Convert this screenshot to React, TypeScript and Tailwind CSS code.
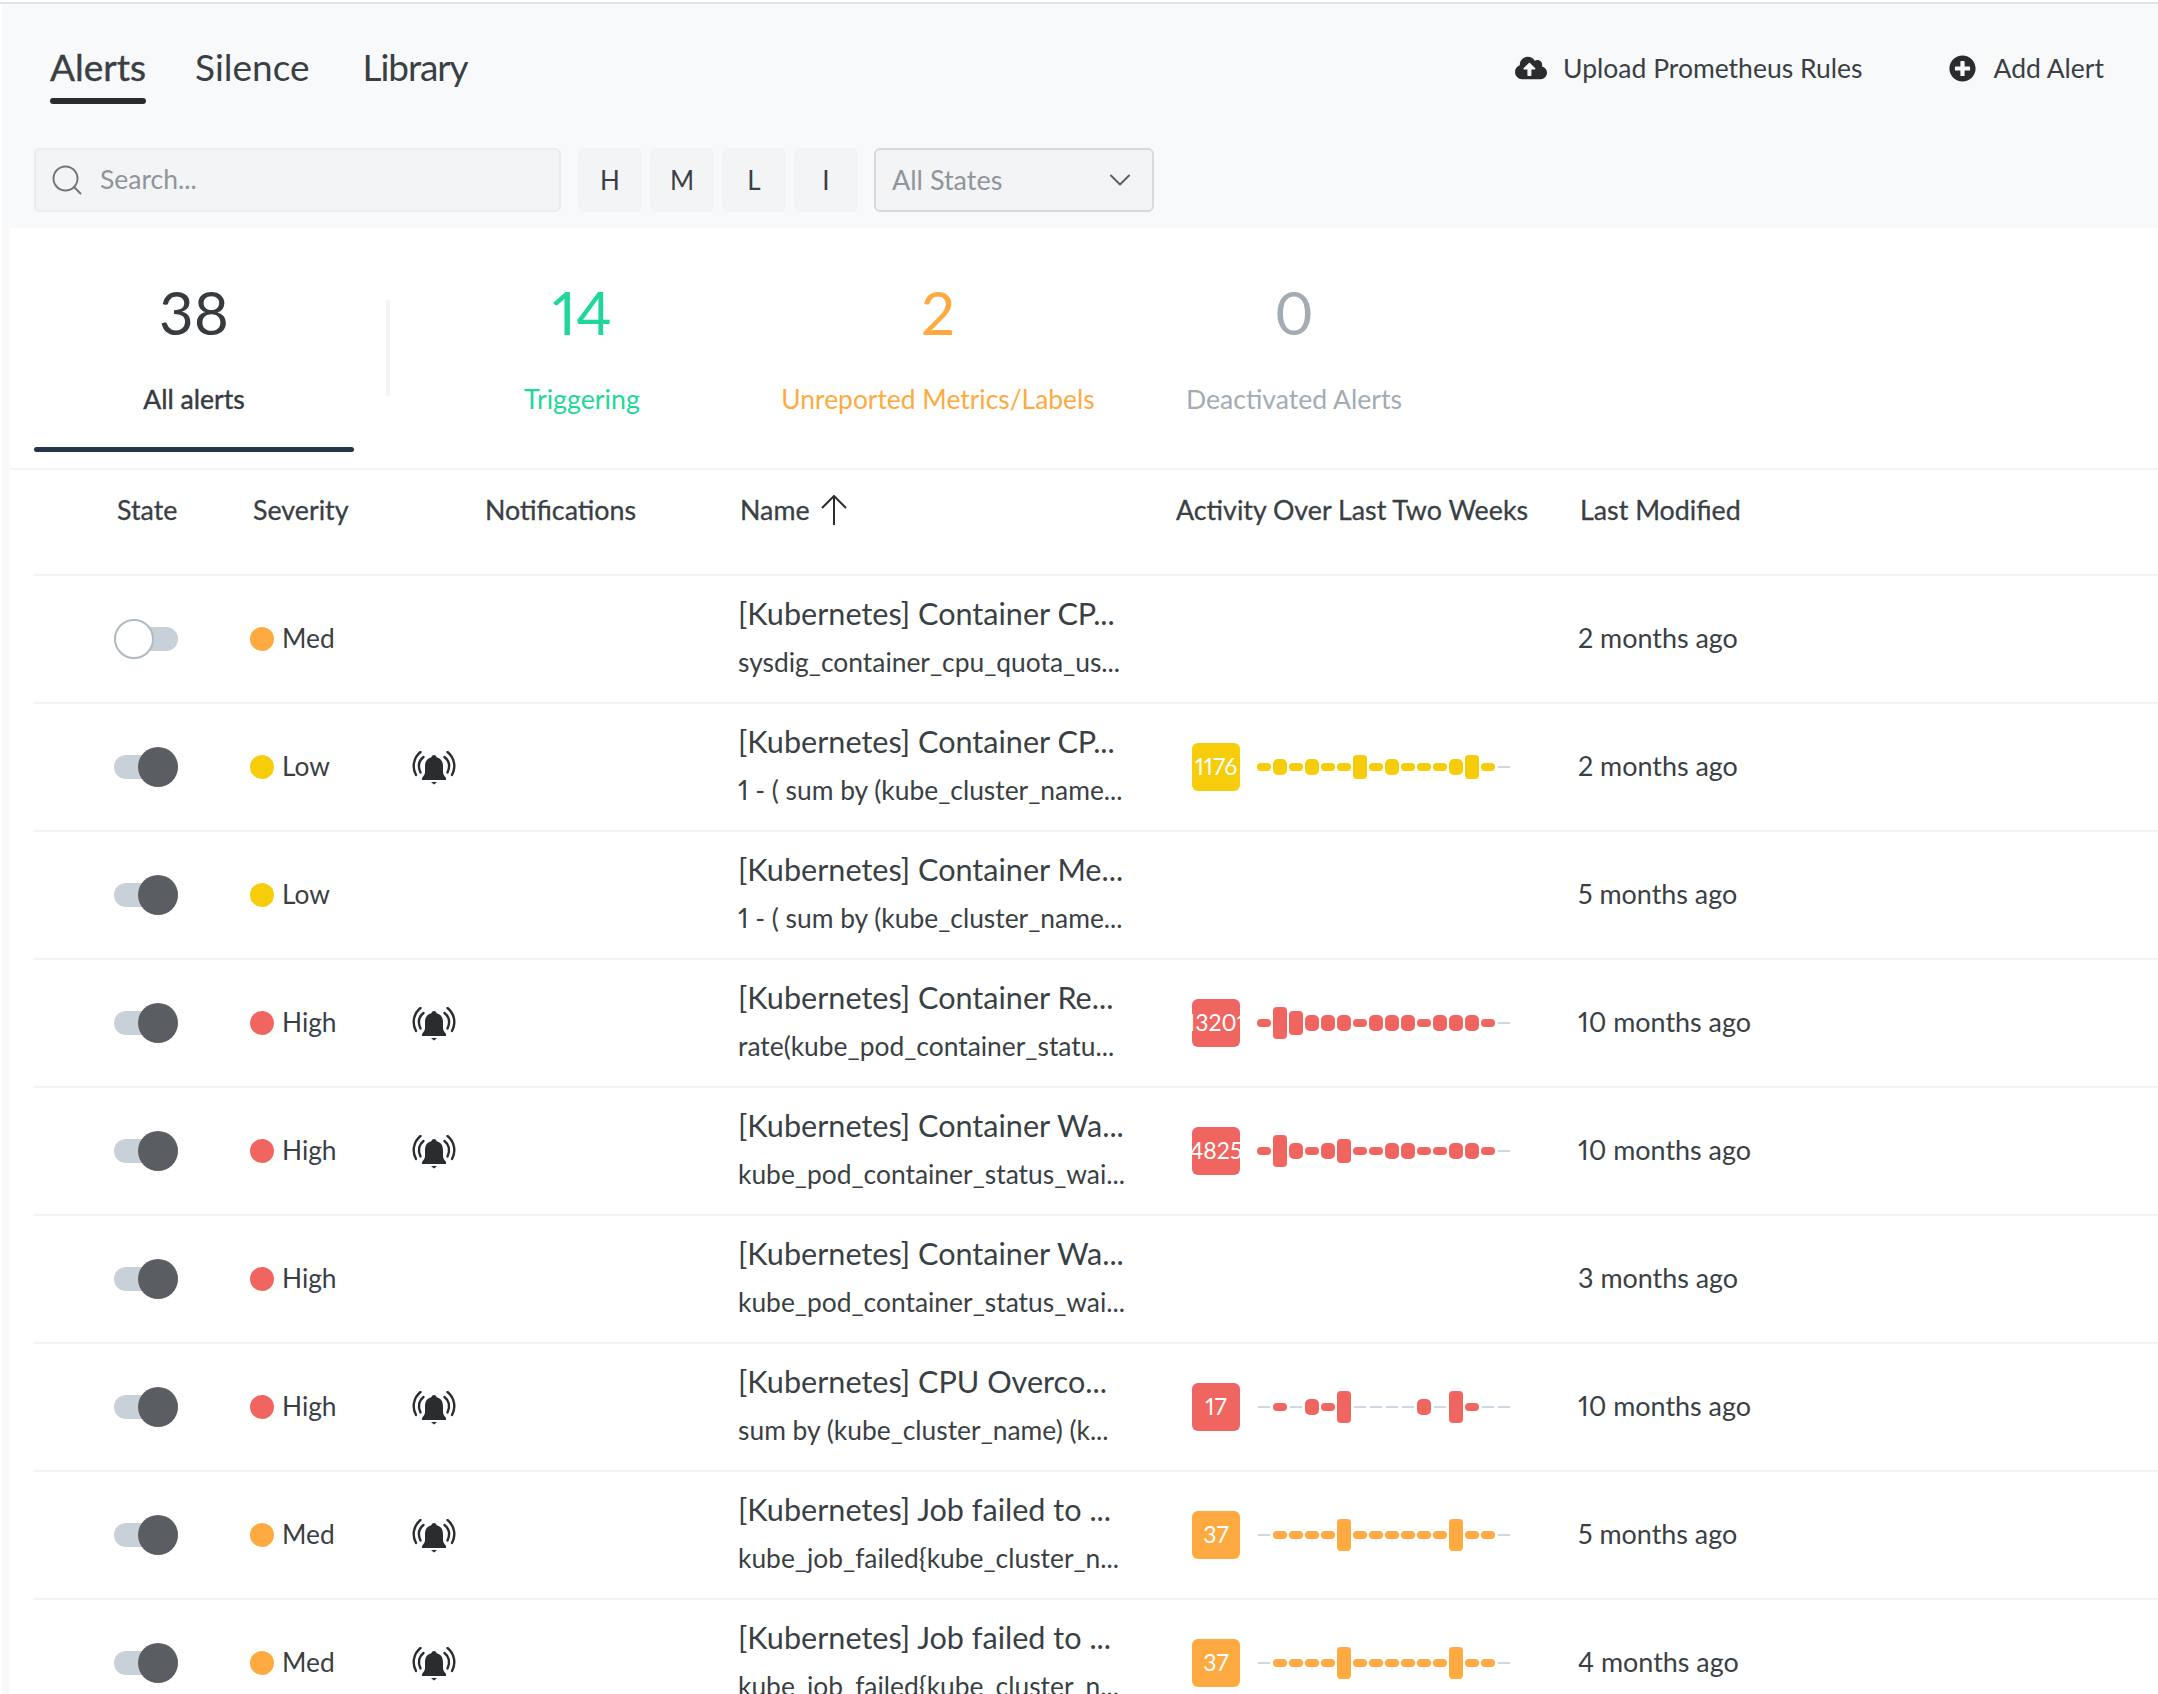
import React from "react";
import { Search, ChevronDown } from "lucide-react";
import { FaCloudUploadAlt, FaPlusCircle } from "react-icons/fa";

type Sev = "Med" | "Low" | "High";
const dotClass: Record<Sev, string> = {
  Med: "bg-[#ffaa40]",
  Low: "bg-[#f7cc0a]",
  High: "bg-[#f06560]",
};

type RowData = {
  on: boolean;
  sev: Sev;
  bell: boolean;
  title: string;
  sub: string;
  count?: string;
  bars?: string;
  time: string;
};

const rows: RowData[] = [
  { on: false, sev: "Med", bell: false, title: "[Kubernetes] Container CP...", sub: "sysdig_container_cpu_quota_us...", time: "2 months ago" },
  { on: true, sev: "Low", bell: true, title: "[Kubernetes] Container CP...", sub: "1 - ( sum by (kube_cluster_name...", count: "1176", bars: "smsmsslsmsssmls-", time: "2 months ago" },
  { on: true, sev: "Low", bell: false, title: "[Kubernetes] Container Me...", sub: "1 - ( sum by (kube_cluster_name...", time: "5 months ago" },
  { on: true, sev: "High", bell: true, title: "[Kubernetes] Container Re...", sub: "rate(kube_pod_container_statu...", count: "13201", bars: "sxlmmmsmmmsmmms-", time: "10 months ago" },
  { on: true, sev: "High", bell: true, title: "[Kubernetes] Container Wa...", sub: "kube_pod_container_status_wai...", count: "4825", bars: "sxmsmlssmmssmms-", time: "10 months ago" },
  { on: true, sev: "High", bell: false, title: "[Kubernetes] Container Wa...", sub: "kube_pod_container_status_wai...", time: "3 months ago" },
  { on: true, sev: "High", bell: true, title: "[Kubernetes] CPU Overco...", sub: "sum by (kube_cluster_name) (k...", count: "17", bars: "-s-msx----m-xs--", time: "10 months ago" },
  { on: true, sev: "Med", bell: true, title: "[Kubernetes] Job failed to ...", sub: "kube_job_failed{kube_cluster_n...", count: "37", bars: "-ssssxssssssxss-", time: "5 months ago" },
  { on: true, sev: "Med", bell: true, title: "[Kubernetes] Job failed to ...", sub: "kube_job_failed{kube_cluster_n...", count: "37", bars: "-ssssxssssssxss-", time: "4 months ago" },
];

function Bell() {
  return (
    <svg width="44" height="34" viewBox="0 0 44 34" fill="none" className="mt-[2px] block text-[#2a2d30]">
      <path
        d="M22 4C23.5 4 24.3 5 24.6 6.2C29 7.2 31 10.5 31 15L31 21C31 24 33 25.5 34 27L34 29L10 29L10 27C11 25.5 13 24 13 21L13 15C13 10.5 15 7.2 19.4 6.2C19.7 5 20.5 4 22 4Z"
        fill="currentColor"
      />
      <path d="M19 31H25L22 33.5Z" fill="currentColor" />
      <g stroke="currentColor" strokeWidth="2.4" strokeLinecap="round">
        <path d="M8.5 1C1 7 0 17 4 24" />
        <path d="M11.5 6C6.5 10 6 16 8.5 21.5" />
        <path d="M35.5 1C43 7 44 17 40 24" />
        <path d="M32.5 6C37.5 10 38 16 35.5 21.5" />
      </g>
    </svg>
  );
}

function Toggle({ on }: { on: boolean }) {
  return (
    <div className={`flex h-[24px] w-[64px] items-center rounded-full bg-[#c8d0d9] ${on ? "justify-end" : "justify-start"}`}>
      {on ? (
        <div className="h-[40px] w-[40px] shrink-0 rounded-full bg-[#5a5e63]" />
      ) : (
        <div className="h-[40px] w-[40px] shrink-0 rounded-full border-2 border-[#b0b8c0] bg-white" />
      )}
    </div>
  );
}

function Spark({ bars, sev }: { bars: string; sev: Sev }) {
  return (
    <div className="ml-[17px] flex items-center gap-[2px]">
      {bars.split("").map((b, i) => {
        if (b === "-") return <div key={i} className="mx-[1px] h-[2px] w-[12px] bg-[#cfd8e0]" />;
        if (b === "s") return <div key={i} className={`h-[8px] w-[14px] rounded-full ${dotClass[sev]}`} />;
        if (b === "m") return <div key={i} className={`h-[16px] w-[14px] rounded-[5px] ${dotClass[sev]}`} />;
        if (b === "l") return <div key={i} className={`h-[24px] w-[14px] rounded-[4px] ${dotClass[sev]}`} />;
        return <div key={i} className={`h-[32px] w-[14px] rounded-[4px] ${dotClass[sev]}`} />;
      })}
    </div>
  );
}

function Row({ r }: { r: RowData }) {
  return (
    <div className="ml-[23px] grid h-[128px] grid-cols-[136px_162px_326px_454px_385px_1fr] items-center border-t-2 border-[#f3f4f6] pl-[81px]">
      <Toggle on={r.on} />
      <div className="flex items-center">
        <span className={`h-[24px] w-[24px] rounded-full ${dotClass[r.sev]}`} />
        <span className="ml-[8px] text-[26.3px] text-[#3a3f44]">{r.sev}</span>
      </div>
      <div>{r.bell && <Bell />}</div>
      <div className="flex flex-col pb-[4px]">
        <span className="whitespace-nowrap text-[30.6px] leading-[36px] text-[#3a3f44]">{r.title}</span>
        <span className="mt-[14px] whitespace-nowrap text-[26.4px] leading-[32px] text-[#3a3f44]">{r.sub}</span>
      </div>
      <div className="flex items-center">
        {r.count && r.bars && (
          <>
            <div className={`flex h-[48px] w-[48px] items-center justify-center overflow-hidden rounded-[6px] ${dotClass[r.sev]}`}>
              <span className="shrink-0 pb-[1px] text-[23px] text-white">{r.count}</span>
            </div>
            <Spark bars={r.bars} sev={r.sev} />
          </>
        )}
      </div>
      <span className="whitespace-nowrap pb-[1px] pl-[1px] text-[26.9px] text-[#3a3f44]">{r.time}</span>
    </div>
  );
}

function Stat({ n, label, cls, w, size }: { n: string; label: string; cls: string; w: string; size: string }) {
  return (
    <div className={`flex flex-col items-center pt-[54px] ${w} ${cls}`}>
      <div className="text-[60px] leading-[60px]">{n}</div>
      <div className={`mt-[41px] whitespace-nowrap leading-[32px] ${size}`}>{label}</div>
    </div>
  );
}

function FilterBtn({ t }: { t: string }) {
  return (
    <button className="flex h-[64px] w-[64px] items-center justify-center rounded-[6px] bg-[#f3f4f6] text-[26px] text-[#3a3f44]">
      {t}
    </button>
  );
}

export default function App() {
  return (
    <div className="proportional-nums h-screen overflow-hidden bg-white pt-[2px] font-['Lato','Noto_Sans',sans-serif]">
      <div className="h-full border-t-2 border-[#e2e3e3] pl-[2px]">
        <div className="h-full bg-[#f8f9fb]">
          <header className="h-[224px]">
            <div className="flex h-[100px] items-start justify-between">
              <nav className="ml-[48px] flex text-[37px] leading-[48px] text-[#3a3f44]">
                <div className="flex flex-col pt-[39px]">
                  <span className="[-webkit-text-stroke:0.4px]">Alerts</span>
                  <div className="mt-[7px] h-[6px] rounded-full bg-[#2a2d30]" />
                </div>
                <span className="ml-[49px] pt-[39px]">Silence</span>
                <span className="ml-[53px] pt-[39px] tracking-[-1.1px]">Library</span>
              </nav>
              <div className="flex items-center pt-[48px] text-[26.5px] leading-[32px] text-[#3a3f44]">
                <FaCloudUploadAlt className="h-[26px] w-[32px] text-[#2a2d30]" />
                <span className="ml-[16px]">Upload Prometheus Rules</span>
                <FaPlusCircle className="ml-[87px] h-[27px] w-[27px] text-[#2a2d30]" />
                <span className="ml-[17px] mr-[54px]">Add Alert</span>
              </div>
            </div>
            <div className="ml-[32px] mt-[44px] flex items-center">
              <div className="flex h-[64px] w-[527px] items-center rounded-[6px] border-2 border-[#e9ecf0] bg-[#f3f4f6] pl-[13px]">
                <Search className="h-[36px] w-[36px] text-[#6f767d]" strokeWidth={1.3} />
                <span className="ml-[15px] text-[26.5px] text-[#8f959b]">Search...</span>
              </div>
              <div className="ml-[17px] flex gap-[8px]">
                <FilterBtn t="H" />
                <FilterBtn t="M" />
                <FilterBtn t="L" />
                <FilterBtn t="I" />
              </div>
              <div className="ml-[16px] flex h-[64px] w-[280px] items-center justify-between rounded-[6px] border-2 border-[#d5dae1] bg-[#f3f4f6] pl-[16px] pr-[14px]">
                <span className="text-[27px] text-[#8f959b]">All States</span>
                <ChevronDown className="h-[36px] w-[36px] text-[#5a5e63]" strokeWidth={1.3} />
              </div>
            </div>
          </header>
          <main className="ml-[8px] h-full bg-white">
            <section className="box-content flex h-[240px] items-start border-b-2 border-[#f3f4f6] pl-[24px]">
              <div className="flex w-[320px] flex-col">
                <Stat n="38" label="All alerts" size="text-[26.6px]" cls="text-[#363b40] [&>div:last-child]:[-webkit-text-stroke:0.4px]" w="w-[320px]" />
                <div className="mt-[32px] h-[5px] rounded-full bg-[#25364a]" />
              </div>
              <div className="mx-[32px] mt-[72px] h-[96px] w-[4px] rounded-full bg-[#f3f4f6]" />
              <Stat n="14" label="Triggering" size="text-[26.8px]" cls="text-[#1fd898]" w="w-[320px]" />
              <Stat n="2" label="Unreported Metrics/Labels" size="text-[26.4px]" cls="text-[#ffaa40]" w="w-[392px]" />
              <Stat n="0" label="Deactivated Alerts" size="text-[26.6px]" cls="text-[#a3abb3]" w="w-[320px]" />
            </section>
            <div className="grid h-[104px] grid-cols-[136px_232px_255px_436px_404px_1fr] items-start pl-[107px] pt-[24px] text-[26.8px] leading-[32px] text-[#3a3f44] [-webkit-text-stroke:0.3px]">
              <span>State</span>
              <span>Severity</span>
              <span>Notifications</span>
              <span className="flex h-[32px] items-center">
                Name
                <svg width="26" height="30" viewBox="0 0 26 30" fill="none" stroke="#2a2d30" strokeWidth="2" className="ml-[11px] block shrink-0">
                  <path d="M13 30V1M1 13L13 1L25 13" />
                </svg>
              </span>
              <span className="whitespace-nowrap">Activity Over Last Two Weeks</span>
              <span>Last Modified</span>
            </div>
            {rows.map((r, i) => (
              <Row key={i} r={r} />
            ))}
          </main>
        </div>
      </div>
    </div>
  );
}
